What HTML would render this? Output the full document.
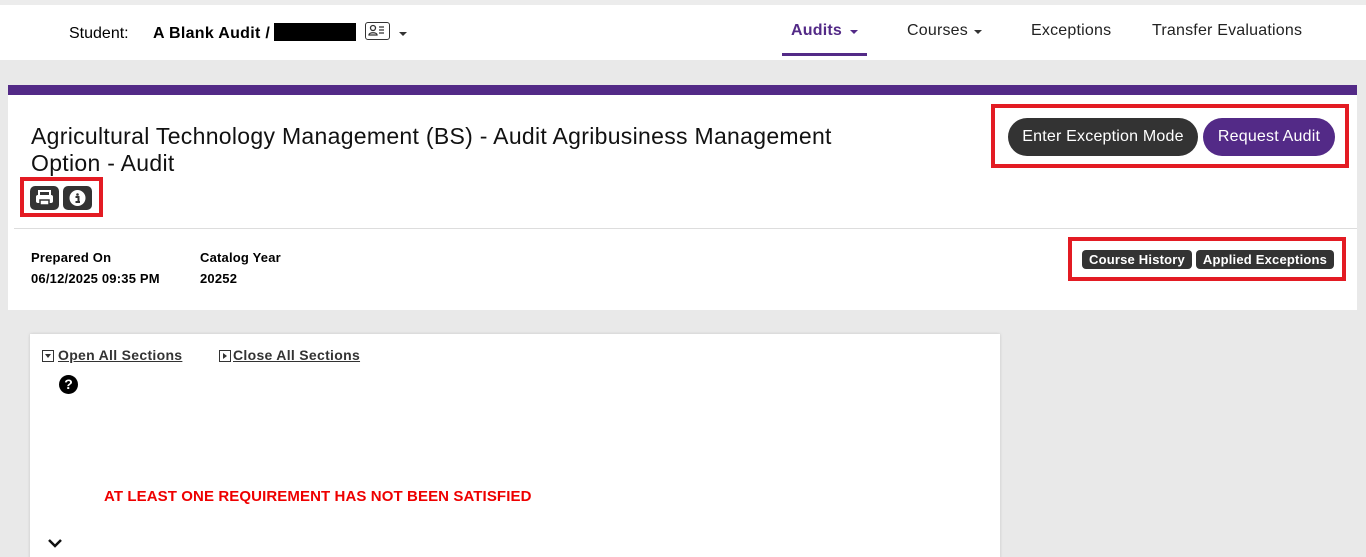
<!DOCTYPE html>
<html><head><meta charset="utf-8"><style>
*{margin:0;padding:0;box-sizing:border-box}
html,body{width:1366px;height:557px;overflow:hidden}
body{background:#e9e9e9;font-family:"Liberation Sans",sans-serif;color:#000;position:relative}
.abs{position:absolute}
#top{left:0;top:0;width:1366px;height:60px;background:#fff;border-top:5px solid #ececec}
.nav{top:22px;font-size:16px;color:#222;letter-spacing:.2px}
#card{left:8px;top:85px;width:1349px;height:225px;background:#fff;border-top:10px solid #532a87}
.redbox{border:4px solid #e31b23}
.btn{border-radius:19px;color:#fff;font-size:16px;height:38px;line-height:38px;padding:0 14px;top:118px;letter-spacing:.2px}
.tag{background:#333;color:#fff;font-weight:bold;font-size:13px;border-radius:4px;height:19px;line-height:19px;padding:0 6px;top:250px;letter-spacing:.2px}
.b{font-weight:bold;font-size:13px;letter-spacing:.2px}
#panel{left:30px;top:334px;width:970px;height:240px;background:#fff;box-shadow:0 0 3px rgba(0,0,0,.15)}
.lnk{top:347px;font-size:14px;font-weight:bold;text-decoration:underline;color:#333;letter-spacing:.3px}
</style></head><body>
<div id="top" class="abs"></div>
<div class="abs" style="left:69px;top:25px;font-size:16px">Student:</div>
<div class="abs" style="left:153px;top:25px;font-size:16px;font-weight:bold;letter-spacing:.3px">A Blank Audit /</div>
<div class="abs" style="left:274px;top:23px;width:82px;height:18px;background:#000"></div>
<div class="abs" style="left:365px;top:22px;width:25px;height:18px;border:1.5px solid #333;border-radius:3px">
<svg width="22" height="15" viewBox="0 0 22 15"><circle cx="7" cy="5" r="2.5" fill="none" stroke="#333" stroke-width="1.3"/><path d="M3 12c0-3 8-3 8 0z" fill="none" stroke="#333" stroke-width="1.3"/><path d="M13 4h5M13 7h5M13 10h5" stroke="#333" stroke-width="1.3"/></svg></div>
<div class="abs" style="left:399px;top:32px;border-left:4px solid transparent;border-right:4px solid transparent;border-top:4px solid #333"></div>
<div class="abs nav" style="left:791px;color:#532a87;font-weight:bold">Audits</div>
<div class="abs" style="left:850px;top:30px;border-left:4px solid transparent;border-right:4px solid transparent;border-top:4px solid #532a87"></div>
<div class="abs" style="left:782px;top:53px;width:85px;height:3px;background:#532a87"></div>
<div class="abs nav" style="left:907px">Courses</div>
<div class="abs" style="left:974px;top:30px;border-left:4px solid transparent;border-right:4px solid transparent;border-top:4px solid #333"></div>
<div class="abs nav" style="left:1031px">Exceptions</div>
<div class="abs nav" style="left:1152px">Transfer Evaluations</div>

<div id="card" class="abs"></div>
<div class="abs" style="left:31px;top:123px;font-size:23px;line-height:27px;width:850px;color:#111;letter-spacing:.3px">Agricultural Technology Management (BS) - Audit Agribusiness Management<br>Option - Audit</div>
<div class="abs redbox" style="left:20px;top:177px;width:83px;height:40px"></div>
<div class="abs" style="left:30px;top:186px;width:29px;height:24px;background:#333;border-radius:5px">
<svg width="29" height="24" viewBox="0 0 29 24"><rect x="9" y="5" width="11" height="5" fill="none" stroke="#fff" stroke-width="2"/><rect x="6" y="9" width="17" height="8" rx="2" fill="#fff"/><rect x="10" y="14" width="9" height="5" fill="#fff" stroke="#333" stroke-width="1.5"/></svg></div>
<div class="abs" style="left:63px;top:186px;width:29px;height:24px;background:#333;border-radius:5px">
<svg width="29" height="24" viewBox="0 0 29 24"><circle cx="14.5" cy="12" r="8" fill="#fff"/><circle cx="14.5" cy="8.5" r="1.3" fill="#333"/><path d="M12.5 11h3v5h1.5M12.5 16h4" stroke="#333" stroke-width="2" fill="none"/></svg></div>
<div class="abs" style="left:14px;top:228px;width:1343px;height:1px;background:#ddd"></div>
<div class="abs redbox" style="left:991px;top:104px;width:358px;height:64px"></div>
<div class="abs btn" style="left:1008px;width:190px;text-align:center;background:#333">Enter Exception Mode</div>
<div class="abs btn" style="left:1203px;width:132px;text-align:center;background:#532a87">Request Audit</div>
<div class="abs redbox" style="left:1068px;top:237px;width:278px;height:44px"></div>
<div class="abs tag" style="left:1082px;width:110px;text-align:center">Course History</div>
<div class="abs tag" style="left:1196px;width:138px;text-align:center">Applied Exceptions</div>
<div class="abs b" style="left:31px;top:250px">Prepared On</div>
<div class="abs b" style="left:31px;top:271px">06/12/2025 09:35 PM</div>
<div class="abs b" style="left:200px;top:250px">Catalog Year</div>
<div class="abs b" style="left:200px;top:271px">20252</div>

<div id="panel" class="abs"></div>
<div class="abs" style="left:42px;top:350px;width:12px;height:12px;border:1px solid #333"><div style="margin:3px 0 0 2px;border-left:3px solid transparent;border-right:3px solid transparent;border-top:4px solid #333;width:0"></div></div>
<div class="abs lnk" style="left:58px">Open All Sections</div>
<div class="abs" style="left:219px;top:350px;width:12px;height:12px;border:1px solid #333"><div style="margin:2px 0 0 3px;border-top:3px solid transparent;border-bottom:3px solid transparent;border-left:4px solid #333;width:0"></div></div>
<div class="abs lnk" style="left:233px">Close All Sections</div>
<div class="abs" style="left:59px;top:375px;width:19px;height:19px;border-radius:50%;background:#000;color:#fff;font-weight:bold;font-size:14px;text-align:center;line-height:19px">?</div>
<div class="abs" style="left:104px;top:488px;font-size:15px;font-weight:bold;color:#e00;letter-spacing:.1px">AT LEAST ONE REQUIREMENT HAS NOT BEEN SATISFIED</div>
<svg class="abs" style="left:47px;top:537px" width="16" height="12" viewBox="0 0 16 12"><path d="M2 3l6 6 6-6" fill="none" stroke="#111" stroke-width="2.5"/></svg>
</body></html>
